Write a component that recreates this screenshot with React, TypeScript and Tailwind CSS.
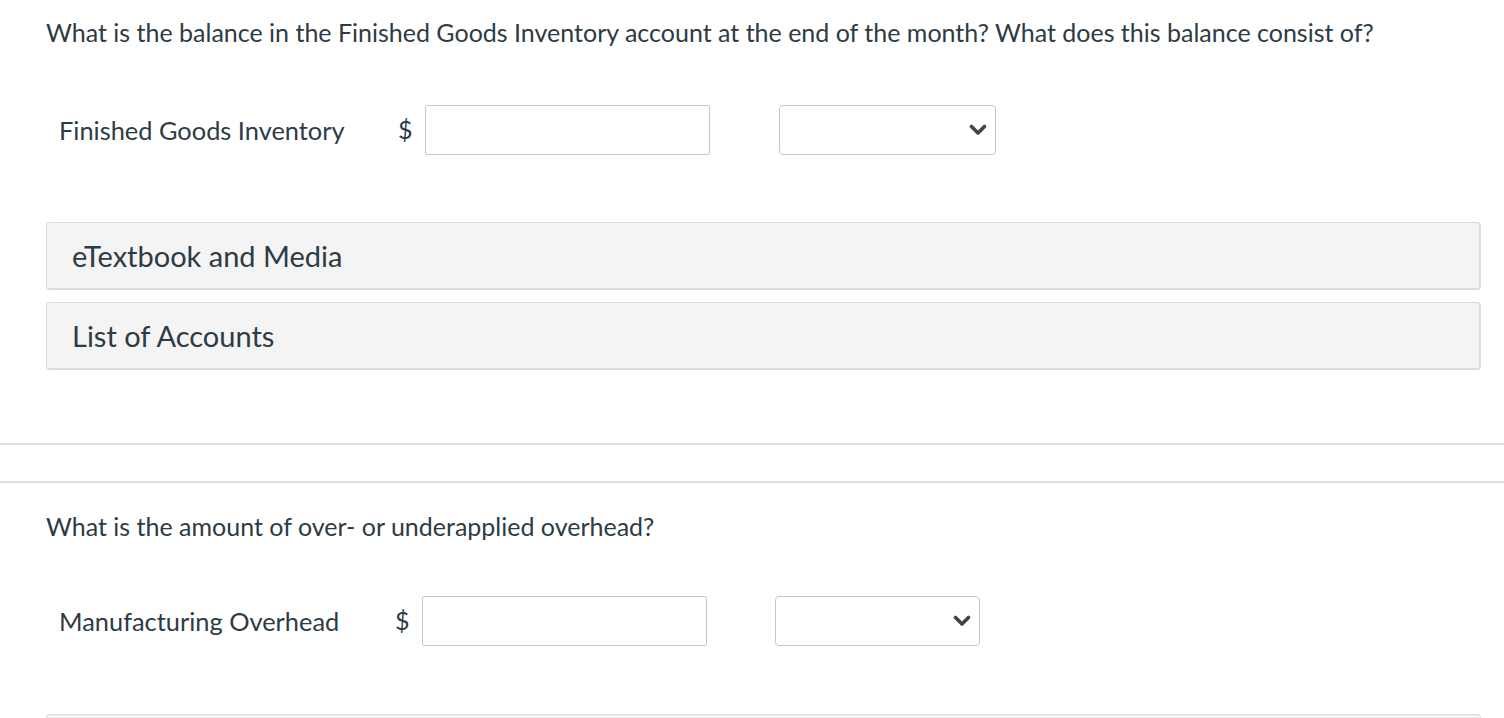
import { ReactNode } from "react";

function Chevron() {
  return (
    <svg width="18" height="12" viewBox="0 0 18 12" className="shrink-0 text-[#444]">
      <polyline points="2.5,2.5 9,9 15.5,2.5" fill="none" stroke="currentColor" strokeWidth="3.6" strokeLinecap="round" strokeLinejoin="round" />
    </svg>
  );
}

function AmountRow({ label, labelWidth, inputWidth, selectWidth, gap }: { label: string; labelWidth: string; inputWidth: string; selectWidth: string; gap: string }) {
  return (
    <div className="flex h-[50px] items-center pl-[13px]">
      <span className={`${labelWidth} text-[25.4px] text-[#2d3b45]`}>{label}</span>
      <span className="w-[27px] text-[25px] text-[#2d3b45]">$</span>
      <input type="text" className={`${inputWidth} h-[50px] rounded-[2px] border border-[#c7c7c7] bg-white outline-none`} />
      <div className={`${gap} ${selectWidth} flex h-[50px] items-center justify-end rounded-[4px] border border-[#c7c7c7] bg-white pr-[8px]`}>
        <Chevron />
      </div>
    </div>
  );
}

function Panel({ children }: { children: ReactNode }) {
  return (
    <div className="flex h-[68px] items-center rounded-[4px] border border-[#dcdcdc] border-b-2 border-r-2 bg-[#f4f4f4] pl-[25px] text-[29px] text-[#2d3b45]">
      {children}
    </div>
  );
}

export default function App() {
  return (
    <div className="h-[718px] overflow-hidden bg-white font-['Lato','Liberation_Sans',sans-serif]">
      <div className="mx-[-3px] rounded-b-[5px] border-b-2 border-[#dedede] pl-[49px] pr-[26px] pb-[73px]">
        <p className="pt-[17px] text-[25px] leading-[30px] text-[#2d3b45]">
          What is the balance in the Finished Goods Inventory account at the end of the month? What does this balance consist of?
        </p>
        <div className="mt-[58px]">
          <AmountRow label="Finished Goods Inventory" labelWidth="w-[339px]" inputWidth="w-[285px]" selectWidth="w-[217px]" gap="ml-[69px]" />
        </div>
        <div className="mt-[67px] flex flex-col gap-[12px]">
          <Panel>eTextbook and Media</Panel>
          <Panel>List of Accounts</Panel>
        </div>
      </div>

      <div className="mx-[-3px] mt-[36px] rounded-t-[5px] border-t-2 border-[#dedede] pl-[49px] pr-[26px]">
        <p className="pt-[28px] text-[25px] leading-[30px] text-[#2d3b45]">What is the amount of over- or underapplied overhead?</p>
        <div className="mt-[55px]">
          <AmountRow label="Manufacturing Overhead" labelWidth="w-[336px]" inputWidth="w-[285px]" selectWidth="w-[205px]" gap="ml-[68px]" />
        </div>
        <div className="mt-[68px] h-[4px] rounded-t-[4px] border border-b-0 border-[#dcdcdc] bg-[#f4f4f4]" />
      </div>
    </div>
  );
}
